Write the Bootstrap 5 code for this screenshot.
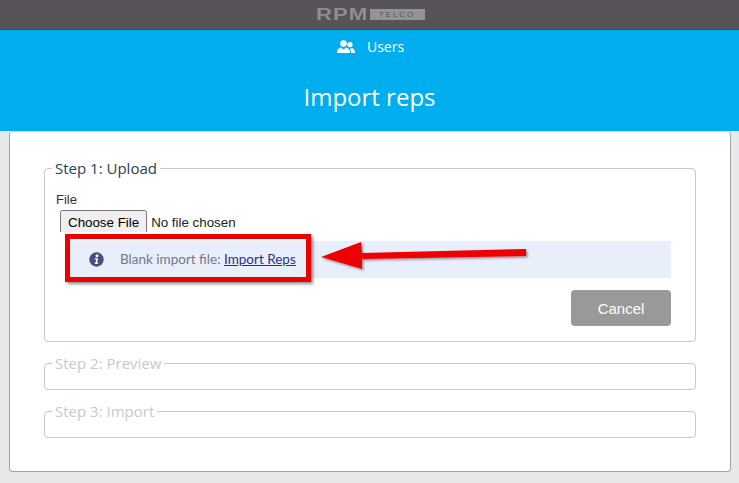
<!DOCTYPE html>
<html lang="en">
<head>
<meta charset="utf-8">
<title>Import reps</title>
<link rel="stylesheet" href="https://cdn.jsdelivr.net/npm/bootstrap@5.3.0/dist/css/bootstrap.min.css">
<style>
html,body{height:100%;overflow:hidden}
body{background:#e8e8ea;font-family:"Open Sans",sans-serif;color:#333;position:relative}
.topbar{height:30px;background:#565458;border-bottom:1px solid #47464a}
.logo-word{display:block;width:53px;text-align:right;font-family:"Liberation Sans",sans-serif;font-weight:700;font-size:16px;letter-spacing:.6px;color:#8f8e91;line-height:1;transform:scaleX(1.39);transform-origin:right center;margin-right:2px}
.logo-tag{font-family:"Liberation Sans",sans-serif;font-size:8px;letter-spacing:1.9px;background:#949396;color:#55545a;line-height:11px;height:11px;width:55px;text-align:center}
.hero{height:101px;background:#00aeef;color:#fff}
.users-link{font-size:14px;line-height:20px;padding-top:7px;color:#fff;text-decoration:none;margin-left:2px}
.hero-title{font-size:24px;font-weight:400;line-height:32px;margin:21px 0 0}
.sheet{margin:0 8px 0 9px;height:341px;background:#fff;border:1px solid #a3a3a3;border-top-color:#d8d8d8;border-radius:4px;padding:26px 34px 0;position:relative}
.stepbox{border:1px solid #c8c8c8;border-radius:4px;padding:0 11px;margin:0 0 11px}
.stepbox legend{float:none;width:auto;font-size:15px;line-height:20px;margin:0 0 0 -4px;padding:0 3px;color:#27415a}
.stepbox.off legend{color:#c9c9c9}
.stepbox.off{height:37px}
.file-label{font-family:"Liberation Sans",sans-serif;font-size:13px;line-height:15px;display:block;margin:14px 0 3px;color:#333}
.file-pick{font-family:"Liberation Sans",sans-serif;font-size:13.333px;margin-left:4px;display:block;color:#222;height:22px}
.file-pick::file-selector-button{font-family:"Liberation Sans",sans-serif;font-size:13.333px}
.note{margin:9px 13px 0 12px;height:37px;background:#e9eefb;color:#74778a;font-family:Lato,sans-serif;font-size:13.500px;padding-left:21px;gap:16px}
.note a{color:#2b2f8c}
.note svg{flex:none}
.cancel-btn{width:100px;height:36px;background:#999;border:0;color:#fff;font-family:"Liberation Sans",sans-serif;font-size:15px;border-radius:4px;margin:12px 13px 15px 0;padding:2px 0 0}
.red-frame{position:absolute;left:65px;top:234px;width:246px;height:48px;border:5px solid #ec0000;box-shadow:2px 2px 3px rgba(0,0,0,.45);pointer-events:none}
.red-arrow{position:absolute;left:318px;top:236px;pointer-events:none}
</style>
</head>
<body>
<header class="topbar d-flex align-items-center justify-content-center">
  <span class="logo-word">RPM</span><span class="logo-tag">TELCO</span>
</header>
<section class="hero text-center">
  <a class="users-link d-inline-flex align-items-center gap-2" href="#">
    <svg width="18" height="14" viewBox="0 0 18 14" fill="#fff" class="me-1"><circle cx="6.500" cy="3.600" r="3.300"/><path d="M0 13c0-3.400 1.600-5 3.800-5.500L6.500 9.400l2.700-1.900C11.400 8 13 9.600 13 13z"/><circle cx="13" cy="4.600" r="2.600"/><path d="M12 8.300l1 .9 1.700-1.300c2 .4 3.300 1.900 3.300 5.100h-3.900c0-1.800-.7-3.500-2.100-4.700z"/></svg>
    <span>Users</span>
  </a>
  <h1 class="hero-title">Import reps</h1>
</section>
<main class="sheet">
  <fieldset class="stepbox">
    <legend>Step 1: Upload</legend>
    <label class="file-label" for="upl">File</label>
    <input class="file-pick" id="upl" type="file">
    <div class="note d-flex align-items-center">
      <svg width="15" height="15" viewBox="0 0 15 15"><circle cx="7.500" cy="7.500" r="7.200" fill="#4b4a85"/><circle cx="8" cy="3.800" r="1.500" fill="#fff"/><path d="M5.800 6.200h3.200l-.9 4.400h1v1.300H5.800v-1.300h.8l.6-3.100H5.800z" fill="#fff"/></svg>
      <span>Blank import file: <a href="#">Import Reps</a></span>
    </div>
    <div class="d-flex justify-content-end">
      <button type="button" class="btn cancel-btn">Cancel</button>
    </div>
  </fieldset>
  <fieldset class="stepbox off"><legend>Step 2: Preview</legend></fieldset>
  <fieldset class="stepbox off"><legend>Step 3: Import</legend></fieldset>
</main>
<div class="red-frame"></div>
<svg class="red-arrow" width="220" height="40" viewBox="0 0 220 40">
  <defs><filter id="ds" x="-5%" y="-20%" width="110%" height="150%"><feDropShadow dx="1.500" dy="1.500" stdDeviation="1" flood-color="#000" flood-opacity=".4"/></filter></defs>
  <path d="M3 21 43 6 L44 17 L208 13 L208 20 L44 23 L44 33z" fill="#ee0000" filter="url(#ds)"/>
</svg>
<script src="https://cdn.jsdelivr.net/npm/bootstrap@5.3.0/dist/js/bootstrap.bundle.min.js"></script>
</body>
</html>
